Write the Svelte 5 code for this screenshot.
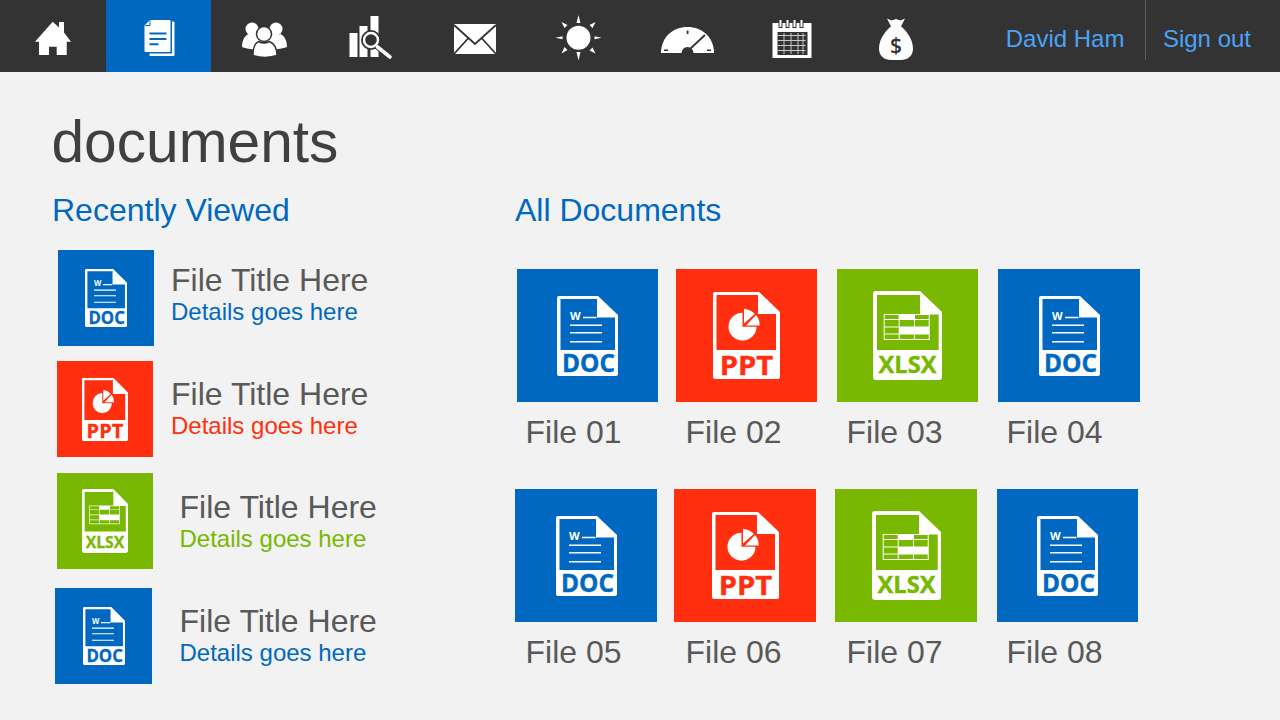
<script>
  const COL = 105.5;
  const navCount = 9;
  const recent = [
    { kind: 'doc', cls: 'r1' },
    { kind: 'ppt', cls: 'r2' },
    { kind: 'xlsx', cls: 'r3' },
    { kind: 'doc', cls: 'r4' }
  ];
  const rowA = [
    { kind: 'doc', name: 'File 01' },
    { kind: 'ppt', name: 'File 02' },
    { kind: 'xlsx', name: 'File 03' },
    { kind: 'doc', name: 'File 04' }
  ];
  const rowB = [
    { kind: 'doc', name: 'File 05' },
    { kind: 'ppt', name: 'File 06' },
    { kind: 'xlsx', name: 'File 07' },
    { kind: 'doc', name: 'File 08' }
  ];
</script>

{#snippet fileIcon(kind)}
  {#if kind === 'doc'}
    <svg class="ic doc" viewBox="0 0 61 80" preserveAspectRatio="none">
      <path class="w" d="M2 0H41L61 19V78a2 2 0 0 1-2 2H2a2 2 0 0 1-2-2V2a2 2 0 0 1 2-2z"/>
      <path class="c" d="M3.500 3H40V21.500H58V54H3.500z"/>
      <text class="wt" x="13" y="24" font-size="11">W</text>
      <path class="w" d="M26 20.800h13.500v1.500H26zM13 28.400h32v1.500H13zM13 36.100h32v1.500H13zM13 45.100h32v1.500H13z"/>
      <text class="lab" x="31.500" y="76" font-size="24.500" textLength="53" lengthAdjust="spacingAndGlyphs">DOC</text>
    </svg>
  {:else if kind === 'ppt'}
    <svg class="ic ppt" viewBox="0 0 67 87" preserveAspectRatio="none">
      <path class="w" d="M2 0H46L67 20V85a2 2 0 0 1-2 2H2a2 2 0 0 1-2-2V2a2 2 0 0 1 2-2z"/>
      <path class="c" d="M3.500 3H45V22H63V58H3.500z"/>
      <path class="w" d="M29.500 20.700V34.700H43.500A14 14 0 1 1 29.500 20.700z"/>
      <path class="w" d="M31 16.700Q38 17.500 41.800 22L31 31.500zM33 33.500H46.700Q46.700 27 43 23z"/>
      <text class="lab" x="33.500" y="83" font-size="27" textLength="53.500" lengthAdjust="spacingAndGlyphs">PPT</text>
    </svg>
  {:else}
    <svg class="ic xlsx" viewBox="0 0 69 89" preserveAspectRatio="none">
      <path class="w" d="M3 0H47L69 21V86a3 3 0 0 1-3 3H3a3 3 0 0 1-3-3V3a3 3 0 0 1 3-3z"/>
      <path class="c" d="M4 4H47V23.500H65.700V59H4z"/>
      <path class="w" d="M10.700 23h46v26h-46z"/>
      <path class="c" d="M11.700 24h14v4h-14zM11.700 29h14v6.500h-14zM11.700 36.500h14v6h-14zM11.700 43.500h14v4.500h-14zM26.700 29h14.300v6.500H26.700zM26.700 43.500h14.300v4.500H26.700zM42 24h13.700v4H42zM42 29h13.700v6.500H42zM42 43.500h13.700v4.500H42z"/>
      <text class="lab" x="34.500" y="82" font-size="22.500" textLength="58" lengthAdjust="spacingAndGlyphs">XLSX</text>
    </svg>
  {/if}
{/snippet}

{#snippet navIcon(i)}
  {#if i === 0}
    <path class="w" d="M52.700 21.700L59 27.500V22h5v10.500L71 41.700H66.700V55H56.700V46.700H49V55H39V41.700H35z"/>
  {:else if i === 1}
    <path class="w" d="M171.500 21.500H173a1 1 0 0 1 1 1V55a1 1 0 0 1-1 1H150a1 1 0 0 1-1-1V53.500H171.500z"/>
    <path class="w" d="M149.500 20H169a1 1 0 0 1 1 1V51a1 1 0 0 1-1 1H145a1 1 0 0 1-1-1V25.500z"/>
    <path class="h" d="M149 32.400h17v2H149zM149 38h17v2H149zM149 43.300h9v2H149z"/>
    <path class="d0" d="M149.500 20.500v5H144.500"/>
  {:else if i === 2}
    <circle class="w" cx="252" cy="29" r="6.500"/>
    <circle class="w" cx="276" cy="29" r="6.500"/>
    <path class="w" d="M242 47c0-7 3-11.500 6.500-13 2 1.500 5 1.500 7 0 4 1 8 5 8 15-8 1-16 0-21.500-2z"/>
    <path class="w" d="M287 47c0-7-3-11.500-6.500-13-2 1.500-5 1.500-7 0-4 1-8 5-8 15 8 1 16 0 21.500-2z"/>
    <circle class="w dk" cx="264" cy="34" r="7.500"/>
    <path class="w dk" d="M253 55.500c0-9 2-12.500 5.500-14 3.500 2 7.500 2 11 0 3.500 1.500 7.500 5 7.500 14-7 2.500-17 2.500-24 0z"/>
  {:else if i === 3}
    <path class="w" d="M349 33h8v24h-8zM359 26h8v31h-8zM370 16h8v41h-8z"/>
    <circle class="gap" cx="370.500" cy="40" r="10"/>
    <circle class="ring" cx="370.500" cy="40" r="7"/>
    <path class="handle-gap" d="M376 46L389.500 57"/>
    <path class="handle" d="M377 47L389.500 57"/>
  {:else if i === 4}
    <path class="w" d="M454 24h42v30h-42z"/>
    <path class="mail" d="M454 25L475 44L496 25M454 54L468 38.500M496 54L482 38.500"/>
  {:else if i === 5}
    <circle class="w" cx="578" cy="37.700" r="12"/>
    <path class="w" d="M578 15l2 8h-4zM578 60.500l2-8.500h-4zM555 37.700l7-1.500v3zM601 37.700l-7-1.500v3zM561 22l6 3-3 3zM595 22l-6 3 3 3zM561 53.500l3-6.500 3 3zM595 53.500l-6-3 3-3z"/>
  {:else if i === 6}
    <path class="w" d="M661 53C661 37 673 27 687.500 27S714 37 714 53z"/>
    <path class="h2" d="M686.700 30.500h1.800v3.500h-1.800zM664 49.500h4v1.600h-4zM707 49.500h4v1.600h-4z"/>
    <path class="needle" d="M690 49L705 35"/>
    <path class="h2" d="M681.500 53a6 6 0 0 1 12 0z"/>
  {:else if i === 7}
    <path class="w" d="M772 23h39v35h-39z"/>
    <path class="h2" d="M777 32h30v23h-30z"/>
    <path class="grid" d="M777 35.500h28M777 40.500h28M777 45.500h28M777 50.500h28M783.500 33v21M790.500 33v21M797.500 33v21M802.500 33v21"/>
    <path class="ringdark" d="M780 23v5M787 23v5M794 23v5M801 23v5"/>
    <path class="ringline" d="M780 20v7M787 20v7M794 20v7M801 20v7"/>
  {:else if i === 8}
    <path class="w" d="M887 18.500l4.500 2 4.500-1.500 4.500 1.500 4.500-2-4 8c3 2 12 11 12 22 0 8-6 11.500-12 11.500h-10c-6 0-12-3.500-12-11.500 0-11 9-20 12-22z"/>
    <text class="dollar" x="896" y="53" font-size="21">$</text>
  {/if}
{/snippet}

<div class="page">
  <nav class="nav">
    {#each Array(navCount) as _, i}
      <div class="nav-item" class:active={i === 1}>
        <svg viewBox="{i * COL} 0 {COL} 72">{@render navIcon(i)}</svg>
      </div>
    {/each}
    <div class="user">
      <span class="name">David Ham</span>
      <span class="out">Sign out</span>
    </div>
  </nav>

  <main class="main">
    <h1>documents</h1>
    <div class="cols">
      <section class="left">
        <h2>Recently Viewed</h2>
        {#each recent as r}
          <div class="row {r.cls}">
            <div class="tile {r.kind} sm">{@render fileIcon(r.kind)}</div>
            <div class="text">
              <div class="title">File Title Here</div>
              <div class="det {r.kind}t">Details goes here</div>
            </div>
          </div>
        {/each}
      </section>
      <section class="right">
        <h2>All Documents</h2>
        <div class="grid-row a">
          {#each rowA as f}
            <div class="cell">
              <div class="tile {f.kind} lg">{@render fileIcon(f.kind)}</div>
              <div class="label">{f.name}</div>
            </div>
          {/each}
        </div>
        <div class="grid-row b">
          {#each rowB as f}
            <div class="cell">
              <div class="tile {f.kind} lg">{@render fileIcon(f.kind)}</div>
              <div class="label">{f.name}</div>
            </div>
          {/each}
        </div>
      </section>
    </div>
  </main>
</div>

<style>
  :global(body) { margin: 0; background: #f2f2f2; }
  .page { width: 1280px; height: 720px; overflow: hidden; background: #f2f2f2; font-family: "Liberation Sans", Arial, sans-serif; }
  .nav { display: flex; height: 72px; background: #333333; }
  .nav-item { width: 105.5px; height: 72px; flex: none; }
  .nav-item svg { display: block; width: 105.5px; height: 72px; }
  .nav-item.active { background: #0068c0; }
  .nav :global(.w) { fill: #fff; }
  .nav :global(.dk) { stroke: #333; stroke-width: 1.5; }
  .nav :global(.h) { fill: #0068c0; }
  .nav :global(.h2) { fill: #333; }
  .nav :global(.d0) { fill: none; stroke: #0068c0; stroke-width: 1; }
  .nav :global(.gap) { fill: #333; }
  .nav :global(.ring) { fill: #333; stroke: #fff; stroke-width: 2.4; }
  .nav :global(.handle-gap) { stroke: #333; stroke-width: 6; fill: none; }
  .nav :global(.handle) { stroke: #fff; stroke-width: 3.600; stroke-linecap: round; fill: none; }
  .nav :global(.mail) { fill: none; stroke: #333; stroke-width: 1.8; }
  .nav :global(.needle) { stroke: #333; stroke-width: 1.8; fill: none; }
  .nav :global(.grid) { stroke: #c8c8c8; stroke-width: 1; fill: none; }
  .nav :global(.ringdark) { stroke: #333; stroke-width: 4; fill: none; }
  .nav :global(.ringline) { stroke: #fff; stroke-width: 2; fill: none; }
  .nav :global(.dollar) { fill: #333; font-family: "Open Sans", sans-serif; font-weight: 600; text-anchor: middle; }
  .user { margin-left: auto; display: flex; height: 60px; font-size: 24px; color: #4aa3f8; }
  .name { line-height: 78px; height: 60px; padding-right: 20.5px; }
  .out { border-left: 1px solid #5c5c5c; line-height: 78px; height: 60px; padding: 0 29px 0 17px; }

  .main { padding-left: 50px; }
  h1 { margin: 37px 0 0 1.5px; font-size: 58.67px; line-height: 66px; font-weight: 400; color: #404040; height: 66px; }
  h2 { margin: 0; font-size: 32px; line-height: 40px; font-weight: 400; color: #0068c0; }
  .cols { display: flex; margin-top: 15px; }
  .left { width: 465px; flex: none; }
  .left h2 { margin-left: 2px; }

  .tile { display: flex; align-items: center; justify-content: center; flex: none; }
  .tile.doc { background: #0068c0; }
  .tile.ppt { background: #ff2f0f; }
  .tile.xlsx { background: #78b800; }
  .tile :global(svg) { overflow: visible; }
  .tile :global(.w) { fill: #fff; }
  .tile.doc :global(.c), .tile.doc :global(.lab) { fill: #0068c0; stroke: #0068c0; }
  .tile.ppt :global(.c), .tile.ppt :global(.lab) { fill: #ff2f0f; stroke: #ff2f0f; }
  .tile.xlsx :global(.c), .tile.xlsx :global(.lab) { fill: #78b800; stroke: #78b800; }
  .tile :global(.c) { stroke: none !important; }
  .tile :global(.wt) { fill: #fff; font-family: "Open Sans", sans-serif; font-weight: 700; }
  .tile :global(.lab) { font-family: "Open Sans", sans-serif; font-weight: 700; text-anchor: middle; stroke-width: 0.4; }
  .sm { width: 96px; height: 96px; }
  .lg { height: 133px; }
  .sm :global(.ic.doc) { width: 42px; height: 58px; }
  .sm :global(.ic.ppt) { width: 46px; height: 63px; }
  .sm :global(.ic.xlsx) { width: 46px; height: 64px; }
  .lg :global(.ic.doc) { width: 61px; height: 80px; }
  .lg :global(.ic.ppt) { width: 67px; height: 87px; }
  .lg :global(.ic.xlsx) { width: 69px; height: 89px; }

  .row { display: flex; align-items: center; }
  .r1 { margin: 20px 0 0 8px; column-gap: 17px; }
  .r2 { margin: 15px 0 0 7px; column-gap: 18px; }
  .r3 { margin: 16px 0 0 7px; column-gap: 26.5px; }
  .r4 { margin: 19px 0 0 5px; column-gap: 27.5px; }
  .r4 .tile { width: 97px; }
  .r1 .text { margin-top: -4px; }
  .r2 .text { margin-top: 2px; }
  .r3 .text { margin-top: 4px; }
  .r4 .text { margin-top: 2px; }
  .title { font-size: 32px; line-height: 32px; color: #595959; }
  .det { font-size: 24px; line-height: 32px; }
  .doct { color: #0068c0; }
  .pptt { color: #ff2f0f; }
  .xlsxt { color: #78b800; }

  .grid-row { display: flex; }
  .grid-row.a { margin: 39px 0 0 2px; }
  .grid-row.b { margin: 37px 0 0 0; }
  .cell { width: 141px; flex: none; }
  .a .cell:nth-child(2) { margin-left: 18px; }
  .a .cell:nth-child(3), .a .cell:nth-child(4) { margin-left: 20px; }
  .a .cell:nth-child(4) { width: 142px; }
  .b .cell { width: 142px; }
  .b .cell:nth-child(2) { margin-left: 17px; }
  .b .cell:nth-child(3) { margin-left: 19px; }
  .b .cell:nth-child(4) { margin-left: 20px; width: 141px; }
  .label { margin-top: 10px; font-size: 32px; line-height: 40px; color: #595959; }
  .a .cell:nth-child(1) .label, .a .cell:nth-child(4) .label { margin-left: 8.5px; }
  .a .cell:nth-child(2) .label, .a .cell:nth-child(3) .label { margin-left: 9.5px; }
  .b .cell:nth-child(1) .label { margin-left: 10.5px; }
  .b .cell:nth-child(2) .label, .b .cell:nth-child(3) .label { margin-left: 11.5px; }
  .b .cell:nth-child(4) .label { margin-left: 9.5px; }
</style>
